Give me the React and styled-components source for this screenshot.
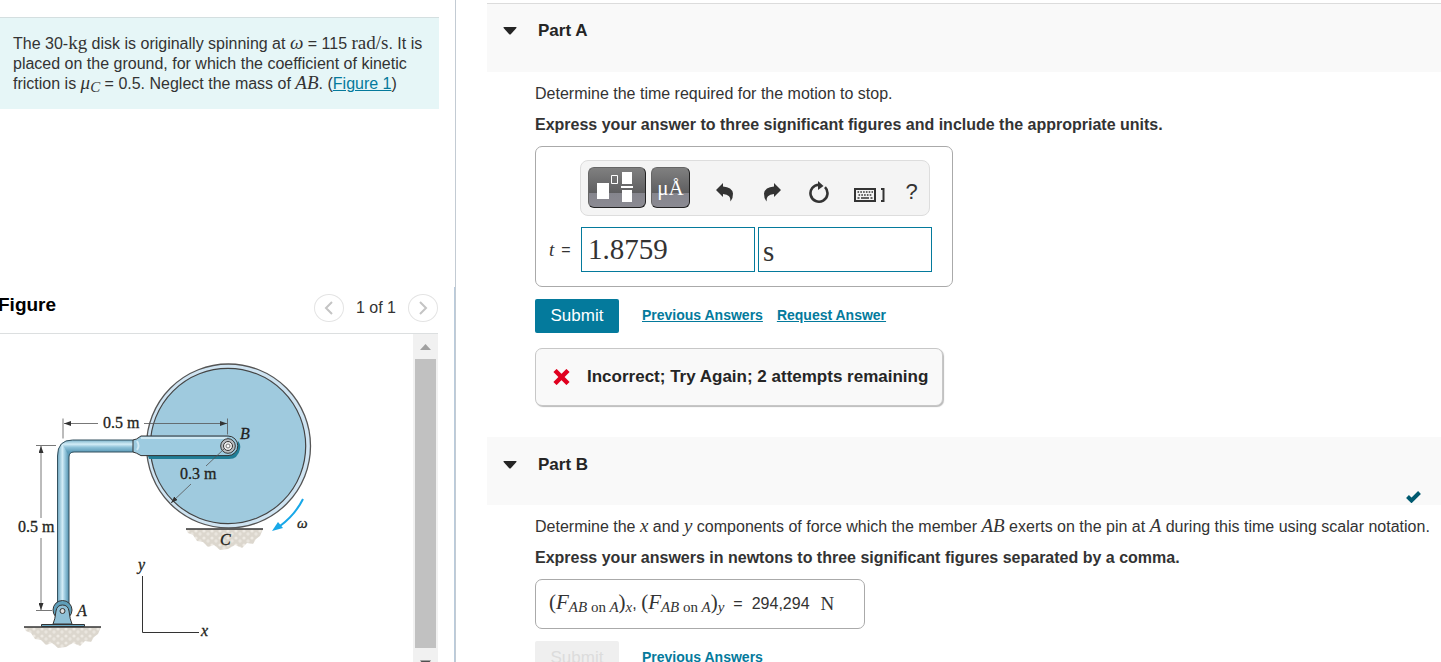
import React from "react"
import styled, { createGlobalStyle } from "styled-components"

const GlobalStyle = createGlobalStyle`
  * {
    box-sizing: border-box;
  }
  body {
    margin: 0;
    background-color: #fff;
    color: #333;
    font-family: "Liberation Sans", Arial, sans-serif;
    font-size: 16px;
    line-height: 20px;
  }
  button, input {
    font-family: inherit;
  }
`
const Page = styled.div`
  display: flex;
  height: 100vh;
  overflow: hidden;
`
const Sidebar = styled.aside`
  flex: 0 0 456px;
  display: flex;
  flex-direction: column;
  border-right: 1px solid #c3cbd3;
`
const ProblemArea = styled.div`
  height: 287px;
  padding: 17px 16px 0 0;
`
const Problem = styled.p`
  margin: 0;
  padding: 16px 13px 15px;
  border-top: 1px solid #d4dfe0;
  background-color: #e6f6f7;
`
const Link = styled.a`
  color: #047a9c;
  text-decoration: underline;
`
const Math = styled.span`
  font-family: "Liberation Serif", serif;
  font-size: ${({ $large }) => ($large ? "21px" : "19px")};
  line-height: 0;
  font-style: ${({ $upright }) => ($upright ? "normal" : "italic")};
`
const Sub = styled.sub`
  font-size: 15px;
  line-height: 0;
  vertical-align: -3px;
`
const Upright = styled.span`
  font-style: normal;
`
const FigureSection = styled.section`
  flex: 1;
  min-height: 0;
  display: flex;
  flex-direction: column;
  padding-right: 16px;
  border-right: 1px solid #b9cbdc;
`
const FigureHeader = styled.div`
  display: flex;
  align-items: center;
  justify-content: space-between;
  height: 47px;
  flex: none;
  padding-bottom: 4px;
  border-bottom: 1px solid #dcdfe0;
`
const FigureTitle = styled.h2`
  margin: 0 0 6px -2px;
  font-size: 19px;
  color: #000;
`
const Pager = styled.div`
  display: flex;
  align-items: center;
  gap: 12px;
`
const PagerButton = styled.button`
  display: flex;
  align-items: center;
  justify-content: center;
  width: 30px;
  height: 28px;
  padding: 0;
  border: 1px solid #e4e4e4;
  border-radius: 50%;
  background-color: #fff;
`
const FigureView = styled.div`
  flex: 1;
  min-height: 0;
  display: flex;
  overflow: hidden;
`
const Drawing = styled.svg`
  flex: 1;
  min-width: 0;
  height: 328px;
  font-family: "Liberation Serif", serif;
  font-size: 16px;
  fill: #231f20;
`
const Scrollbar = styled.div`
  display: flex;
  flex-direction: column;
  align-items: center;
  justify-content: space-between;
  width: 25px;
  background-color: #f1f1f1;
`
const ScrollArrow = styled.svg`
  flex: none;
  width: 25px;
  height: ${({ $short }) => ($short ? "14px" : "25px")};
  fill: #a0a0a0;
`
const Thumb = styled.div`
  flex: 1;
  width: 21px;
  background-color: #c1c1c1;
`
const Content = styled.main`
  flex: 1;
  min-width: 0;
  padding: 3px 0 0 31px;
`
const PartHeader = styled.header`
  display: flex;
  align-items: flex-start;
  height: ${({ $line }) => ($line ? "69px" : "68px")};
  padding: ${({ $line }) => ($line ? "17px" : "18px")} 20px 0 16px;
  background-color: #f9f9f9;
  border-top: ${({ $line }) => ($line ? "1px solid #dcdcdc" : "none")};
`
const Toggle = styled.button`
  display: flex;
  align-items: center;
  gap: 21px;
  padding: 0;
  border: none;
  background: none;
  color: #252525;
  font-size: 17px;
  font-weight: bold;
  line-height: 20px;
`
const DoneMark = styled.svg`
  width: 15px;
  height: 12px;
  margin: 36px 0 0 auto;
`
const PartBody = styled.div`
  padding: 12px 4px 31px 48px;
`
const Prompt = styled.p`
  margin: 0 0 11px;
  line-height: 20px;
`
const Instruction = styled(Prompt)`
  font-weight: bold;
`
const AnswerBox = styled.div`
  width: fit-content;
  padding: 13px 20px 14px 13px;
  border: 1px solid #aaa;
  border-radius: 7px;
`
const Toolbar = styled.div`
  display: flex;
  align-items: flex-start;
  height: 56px;
  width: 350px;
  margin: 0 0 11px 31px;
  padding: 6px 2px 6px 7px;
  border: 1px solid #ddd;
  border-radius: 8px;
  background-color: #f4f4f4;
`
const PaletteButton = styled.button`
  width: ${({ $width }) => $width};
  height: 41px;
  margin-right: 5px;
  padding: 0;
  border: 1px solid #444;
  border-color: #666 #222 #222 #666;
  border-radius: 6px;
  background: linear-gradient(#808080, #5e5e60 64%, #85858d 64%, #8b8a92);
  color: #fff;
  font-family: "Liberation Serif", serif;
  font-size: 21px;
  line-height: 40px;

  svg {
    display: block;
  }
`
const ToolButton = styled.button`
  display: flex;
  align-items: center;
  justify-content: center;
  width: ${({ $width }) => $width || "47px"};
  height: 50px;
  padding: 0;
  border: none;
  background: none;
  color: #333;
  font-size: 22px;

  &:nth-of-type(3) {
    margin-left: 6px;
  }
`
const Fields = styled.div`
  display: flex;
  align-items: center;
  gap: 3px;
`
const FieldLabel = styled.label`
  display: flex;
  align-items: center;
  gap: 7px;
  width: 29px;
`
const Field = styled.input`
  width: 174px;
  height: 45px;
  padding: ${({ $unit }) => ($unit ? "3px 4px 0" : "0 6px")};
  border: 1px solid #047a9c;
  border-radius: 0;
  outline: none;
  color: #333;
  font-family: "Liberation Serif", serif;
  font-size: 29px;
`
const Actions = styled.div`
  display: flex;
  align-items: center;
  gap: 14px;
  margin-top: 12px;
`
const Submit = styled.button`
  width: 84px;
  height: 34px;
  margin-right: 9px;
  padding: 0;
  border: none;
  border-radius: 2px;
  background-color: #047a9c;
  color: #fff;
  font-size: 17px;

  &:disabled {
    background-color: #efefef;
    color: #dcdcdc;
  }
`
const ActionLink = styled(Link)`
  padding-bottom: 2px;
  font-size: 14px;
  font-weight: bold;
`
const Feedback = styled.div`
  display: flex;
  align-items: center;
  gap: 17px;
  width: fit-content;
  height: 58px;
  margin-top: 15px;
  padding: 0 14px 0 17px;
  border: 1px solid #c7c7c7;
  border-radius: 7px;
  background-color: #f9f9f9;
  box-shadow: 1px 1px 1px #bbb;
  color: #252525;
  font-size: 17px;
  font-weight: bold;
`
const Result = styled.div`
  display: flex;
  align-items: center;
  gap: 9px;
  width: 330px;
  height: 50px;
  padding: 0 13px;
  border: 1px solid #aaa;
  border-radius: 7px;
`
const Value = styled.span`
  margin-right: 2px;
`

const Force = ({ axis }) => (
  <Math $large>
    <Upright>(</Upright>F
    <Sub>
      AB <Upright>on</Upright> A
    </Sub>
    <Upright>)</Upright>
    <Sub>{axis}</Sub>
  </Math>
)

const PartToggle = ({ children }) => (
  <Toggle type="button" aria-expanded="true">
    <svg width="14" height="8" viewBox="0 0 14 8" fill="#252525">
      <path d="M1 0h12q1 0 .4 1L8 7q-1 1-2 0L.6 1Q0 0 1 0z" />
    </svg>
    {children}
  </Toggle>
)

const Ground = ({ x, y }) => (
  <g transform={`translate(${x} ${y})`}>
    <path
      d="M0 0h77l-3 7-4 3-3 5-6-1-5 5-7-3-7 4-8 1-6-5-6 2-5-5-6-1-4-6-5-2z"
      fill="url(#soil)"
    />
    <path d="M0 0h77" stroke="#333" strokeWidth="1.5" />
  </g>
)

const DiskFigure = () => (
  <Drawing viewBox="0 0 413 328" preserveAspectRatio="xMinYMin meet" role="img" aria-label="Disk held by member AB">
    <defs>
      <pattern id="soil" width="8" height="7" patternUnits="userSpaceOnUse">
        <path d="M0 0h8v7H0z" fill="#dcd7ce" />
        <circle cx="2" cy="2" r="1.6" fill="#eeeae3" />
        <circle cx="6" cy="5" r="1.7" fill="#e9e5de" />
      </pattern>
      <linearGradient id="postFill" gradientUnits="userSpaceOnUse" x1="57" x2="69" y1="0" y2="0">
        <stop offset="0" stopColor="#5f9cb8" />
        <stop offset=".45" stopColor="#d3edf7" />
        <stop offset=".65" stopColor="#9ccbe0" />
        <stop offset="1" stopColor="#4f8fac" />
      </linearGradient>
      <linearGradient id="rodFill" gradientUnits="userSpaceOnUse" x1="0" x2="0" y1="106" y2="118">
        <stop offset="0" stopColor="#79b1c9" />
        <stop offset=".35" stopColor="#d3edf7" />
        <stop offset=".6" stopColor="#8fc2d9" />
        <stop offset="1" stopColor="#5b9bb8" />
      </linearGradient>
      <marker id="tip" viewBox="0 0 7 5" refX="7" refY="2.5" markerWidth="7" markerHeight="5" markerUnits="userSpaceOnUse" orient="auto-start-reverse">
        <path d="M0 0l7 2.5L0 5z" fill="#333" />
      </marker>
    </defs>

    <Ground x={186} y={195} />
    <Ground x={24} y={293} />

    <circle cx="228.5" cy="112" r="82" fill="#cfe4f2" stroke="#555" strokeWidth="1.3" />
    <circle cx="228" cy="112" r="77.7" fill="#9fcade" stroke="#444" strokeWidth="1.2" />

    <path d="M146 116h83a9 9 0 0 0 9-9q3 3 2 8-2 10-11 10h-80z" fill="#217d96" />
    <path d="M57.5 272V122q0-16 15-16h61v12H74q-5 0-5 5v149z" fill="url(#postFill)" />
    <path d="M62 109q4-3 10-3h61.500v12H74q-4 0-5 4z" fill="url(#rodFill)" />
    <path d="M57.5 272V122q0-16 15-16h61v12H74q-5 0-5 5v149z" fill="none" stroke="#34515f" />
    <path d="M133 106q3 0 8-4h87a9.800 9.800 0 0 1 0 19.600h-87q-5-3-8-3.600z" fill="#9dcbe0" stroke="#333" />
    <path d="M141 104h86M137 107q3 5 0 9" stroke="#d0e9f3" strokeWidth="2" fill="none" />
    <circle cx="228" cy="112" r="7.300" fill="#b9bec2" stroke="#333" />
    <circle cx="228" cy="112" r="4.500" fill="#eee" stroke="#333" />
    <circle cx="228" cy="112" r="2" fill="#fff" stroke="#777" />

    <circle cx="62.500" cy="276" r="9.500" fill="#5e9eb9" stroke="#333" />
    <path d="M53 290q2-4 3-13 1-6 6.500-6t6.500 6q1 9 3 13z" fill="#8fc0d6" stroke="#333" />
    <circle cx="62.500" cy="277" r="2.500" fill="#ddd" stroke="#333" />
    <path d="M41.500 290.500h43v2h-43z" fill="#6ba9c4" stroke="#333" />

    <g stroke="#555" strokeWidth=".8" fill="none">
      <path d="M63 84.500v20M227.500 84.500v16M36 111.500h20M36 276.500h16" />
      <path d="M98 89.500H64" markerEnd="url(#tip)" />
      <path d="M144 89.500h83" markerEnd="url(#tip)" />
      <path d="M41 184v-72" markerEnd="url(#tip)" />
      <path d="M41 204v72" markerEnd="url(#tip)" />
      <path d="M224 115l-18 17" />
      <path d="M191 150l-20 19" markerEnd="url(#tip)" />
      <path d="M142.500 242v56.500H199" stroke="#333" strokeWidth="1" />
    </g>
    <path d="M303 165q-8 16-23 27" fill="none" stroke="#18a8e8" strokeWidth="2" />
    <path d="M272 197l6-9 5 6z" fill="#18a8e8" />

    <g stroke="#231f20" strokeWidth=".3">
      <text x="103" y="94">0.5 m</text>
      <text x="180" y="145">0.3 m</text>
      <text x="18" y="198">0.5 m</text>
      <g fontStyle="italic">
        <text x="240" y="105">B</text>
        <text x="77" y="282">A</text>
        <text x="220" y="211">C</text>
        <text x="297" y="194" fontSize="15">ω</text>
        <text x="138" y="236">y</text>
        <text x="201" y="302">x</text>
      </g>
    </g>
  </Drawing>
)

const App = () => {
  return (
    <Page>
      <GlobalStyle />
      <Sidebar>
        <ProblemArea>
          <Problem>
            The 30-<Math $upright>kg</Math> disk is originally spinning at <Math>ω</Math> = 115{" "}
            <Math $upright>rad/s</Math>. It is placed on the ground, for which the coefficient of
            kinetic friction is <Math>μ<Sub>C</Sub></Math> = 0.5. Neglect the mass of{" "}
            <Math>AB</Math>. (<Link href="#figure">Figure 1</Link>)
          </Problem>
        </ProblemArea>
        <FigureSection id="figure">
          <FigureHeader>
            <FigureTitle>Figure</FigureTitle>
            <Pager>
              <PagerButton type="button" aria-label="Previous figure">
                <svg width="10" height="14" viewBox="0 0 10 14" fill="none" stroke="#c4c4c4" strokeWidth="2">
                  <path d="M8 1L2 7l6 6" />
                </svg>
              </PagerButton>
              <span>1 of 1</span>
              <PagerButton type="button" aria-label="Next figure">
                <svg width="10" height="14" viewBox="0 0 10 14" fill="none" stroke="#c4c4c4" strokeWidth="2">
                  <path d="M2 1l6 6-6 6" />
                </svg>
              </PagerButton>
            </Pager>
          </FigureHeader>
          <FigureView>
            <DiskFigure />
            <Scrollbar aria-hidden="true">
              <ScrollArrow viewBox="0 0 25 25">
                <path d="M7 16l5.500-6 5.500 6z" />
              </ScrollArrow>
              <Thumb />
              <ScrollArrow $short viewBox="0 0 25 14">
                <path d="M7 12.500h11l-5.500 6z" fill="#505050" />
              </ScrollArrow>
            </Scrollbar>
          </FigureView>
        </FigureSection>
      </Sidebar>

      <Content>
        <PartHeader $line>
          <PartToggle>Part A</PartToggle>
        </PartHeader>
        <PartBody>
          <Prompt>Determine the time required for the motion to stop.</Prompt>
          <Instruction>
            Express your answer to three significant figures and include the appropriate units.
          </Instruction>
          <AnswerBox>
            <Toolbar>
              <PaletteButton type="button" $width="58px" aria-label="Templates">
                <svg width="56" height="39" viewBox="0 0 56 39" fill="#fff">
                  <path d="M8 15h12v16H8zM33 4h10v12H33zM33 22h10v12H33zM32 18h12v2H32z" />
                  <path d="M22.500 7.500h6v8h-6z" fill="none" stroke="#fff" />
                </svg>
              </PaletteButton>
              <PaletteButton type="button" $width="39px">μÅ</PaletteButton>
              <ToolButton type="button" aria-label="Undo">
                <svg width="18" height="20" viewBox="0 0 18 20" fill="#333">
                  <path d="M0 8L7 1v3.500q9 .5 10 7 .3 4-2.500 8 .8-7-7.500-7.500v3z" />
                </svg>
              </ToolButton>
              <ToolButton type="button" aria-label="Redo">
                <svg width="18" height="20" viewBox="0 0 18 20" fill="#333">
                  <path d="M18 8L11 1v3.500q-9 .5-10 7-.3 4 2.500 8-.8-7 7.500-7.500v3z" />
                </svg>
              </ToolButton>
              <ToolButton type="button" aria-label="Reset">
                <svg width="22" height="24" viewBox="0 0 22 24">
                  <path d="M11 4.700a8.500 8.500 0 1 0 6 2.500" fill="none" stroke="#333" strokeWidth="2.600" />
                  <path d="M10 1l5.500 5L10 10z" fill="#333" />
                </svg>
              </ToolButton>
              <ToolButton type="button" $width="54px" aria-label="Keyboard shortcuts">
                <svg width="32" height="24" viewBox="0 0 32 24" fill="none" stroke="#333">
                  <path d="M2 9h20v12H2z" strokeWidth="2" />
                  <path d="M4.500 12h15.500M5.500 15h14" strokeWidth="1.600" strokeDasharray="1.600 1.200" />
                  <path d="M4.500 18h2M8 18h8M17.500 18h2" strokeWidth="1.600" />
                  <path d="M28 9h2.500v12H28" strokeWidth="2" />
                </svg>
              </ToolButton>
              <ToolButton type="button" $width="31px">?</ToolButton>
            </Toolbar>
            <Fields>
              <FieldLabel htmlFor="value">
                <Math>t</Math>=
              </FieldLabel>
              <Field id="value" defaultValue="1.8759" />
              <Field $unit aria-label="Units" defaultValue="s" />
            </Fields>
          </AnswerBox>
          <Actions>
            <Submit type="button">Submit</Submit>
            <ActionLink href="#previous-a">Previous Answers</ActionLink>
            <ActionLink href="#request-a">Request Answer</ActionLink>
          </Actions>
          <Feedback role="status">
            <svg width="17" height="16" viewBox="0 0 17 16" stroke="#e0001f" strokeWidth="4.500">
              <path d="M2 1.500l13 13M15 1.500l-13 13" />
            </svg>
            Incorrect; Try Again; 2 attempts remaining
          </Feedback>
        </PartBody>

        <PartHeader>
          <PartToggle>Part B</PartToggle>
          <DoneMark viewBox="0 0 15 12" fill="none" stroke="#005a70" strokeWidth="4">
            <path d="M1.500 5.500l4 4L13.500 1.500" />
          </DoneMark>
        </PartHeader>
        <PartBody>
          <Prompt>
            Determine the <Math>x</Math> and <Math>y</Math> components of force which the member{" "}
            <Math>AB</Math> exerts on the pin at <Math>A</Math> during this time using scalar
            notation.
          </Prompt>
          <Instruction>
            Express your answers in newtons to three significant figures separated by a comma.
          </Instruction>
          <Result>
            <span>
              <Force axis="x" />, <Force axis="y" />
            </span>
            <span>=</span>
            <Value>294,294</Value>
            <Math $upright>N</Math>
          </Result>
          <Actions>
            <Submit type="button" disabled>
              Submit
            </Submit>
            <ActionLink href="#previous-b">Previous Answers</ActionLink>
          </Actions>
        </PartBody>
      </Content>
    </Page>
  )
}

export default App
